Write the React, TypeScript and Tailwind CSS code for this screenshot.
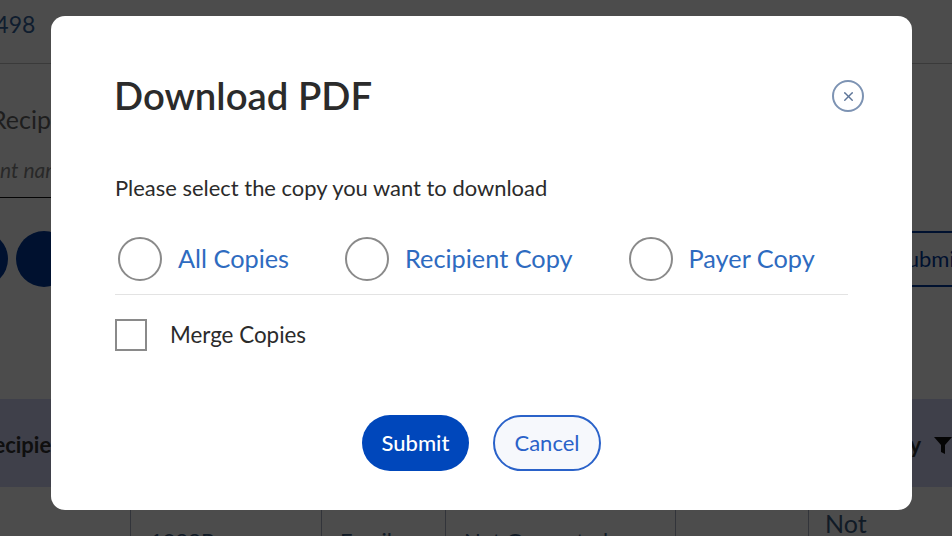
import { X } from 'lucide-react';

const font = "font-['Lato','Noto_Sans',sans-serif]";

// page that sits behind the dialog, only its edges show
function BackgroundPage() {
	return (
		<div className="w-[952px] h-[536px] overflow-hidden bg-white text-[#555]">
			<div className="h-16 border-b border-[#c4c4c4] pt-[6px] -ml-[18px] text-[23px] leading-9 text-[#34639c]">
				1498
			</div>
			<div className="h-[136px] pt-[39px] -ml-[9px]">
				<div className="text-[25px] leading-8 text-[#666]">Recipient</div>
				<div className="w-[70px] h-[63px] -ml-[10px] border-b-[1.5px] border-[#111] pt-[21px] italic text-[21px] leading-7 whitespace-nowrap text-[#888]">
					<span className="ml-[9px] block">ent name</span>
				</div>
			</div>
			<div className="h-[200px] pt-[31px] flex">
				<div className="w-[56px] h-[56px] -ml-[48px] rounded-full bg-[#003a9e]" />
				<div className="w-[56px] h-[56px] ml-[8px] rounded-full bg-[#003a9e]" />
				<div className="w-[150px] h-[56px] ml-auto -mr-[48px] rounded-full border-2 border-[#003a9e] pl-[43px] text-[22px] leading-[52px] text-[#003a9e]">
					Submit
				</div>
			</div>
			<div className="h-[88px] -mt-[1px] bg-[#d3d6f8] flex items-center justify-between font-bold text-[22px] text-[#333] pt-[3px]">
				<span className="-ml-[20px]">Recipient</span>
				<span className="flex items-center gap-[12px] -mr-[1px]">
					Copy
					<svg width="20" height="20" viewBox="0 0 20 20">
						<path d="M1 2h18l-7 8v9l-4-2v-7z" fill="#111" />
					</svg>
				</span>
			</div>
			<div className="flex h-[60px] text-[22px] text-[#3a5a80]">
				<div className="w-[131px] border-r border-[#a8b0c4]" />
				<div className="w-[191px] border-r border-[#a8b0c4] pl-[19px] pt-[37px]">1099R</div>
				<div className="w-[124px] border-r border-[#a8b0c4] pl-[18px] pt-[37px]">Email</div>
				<div className="w-[230px] border-r border-[#a8b0c4] pl-[18px] pt-[37px]">Not Generated</div>
				<div className="w-[133px] border-r border-[#a8b0c4]" />
				<div className="pl-[16px] pt-[22px] text-[25px] leading-7">Not</div>
			</div>
		</div>
	);
}

function CopyOption({ label }: { label: string }) {
	return (
		<label className="flex items-center gap-[16px] ml-[3px]">
			<span className="w-[44px] h-[44px] rounded-full border-2 border-[#8a8a8a] bg-white" />
			<span className="pb-[2px] text-[25.3px] leading-8 text-[#2e6bc0] whitespace-nowrap">{label}</span>
		</label>
	);
}

export default function App() {
	return (
		<div className={`relative w-[952px] h-[536px] overflow-hidden ${font}`}>
			<BackgroundPage />
			<div className="absolute inset-0 bg-black/70" />
			<div className="absolute left-[51px] top-[16px] w-[861px] h-[494px] rounded-[14px] bg-white px-[64px] text-[#2b2b2b]">
				<div className="flex items-center justify-between pt-[53px] h-[107px]">
					<h2 className="text-[38.3px] leading-[54px] font-semibold -mt-[2px] -ml-[1px]">Download PDF</h2>
					<button className="w-[32px] h-[32px] -mr-[16px] rounded-full border-2 border-[#7d93b3] flex items-center justify-center text-[#5d7598]">
						<X size={15} strokeWidth={2.25} />
					</button>
				</div>
				<p className="mt-[49px] text-[21.95px] leading-8">Please select the copy you want to download</p>
				<div className="mt-[33px] pb-[13px] flex gap-[53px] border-b border-[#e3e3e3]">
					<CopyOption label="All Copies" />
					<CopyOption label="Recipient Copy" />
					<CopyOption label="Payer Copy" />
				</div>
				<div className="mt-[24px] flex items-center gap-[23px]">
					<span className="w-[32px] h-[32px] border-2 border-[#8a8a8a]" />
					<span className="text-[22.4px] leading-8">Merge Copies</span>
				</div>
				<div className="mt-[64px] flex justify-center gap-[24px]">
					<button className="w-[107px] h-[56px] pb-[2px] rounded-full bg-[#0047bb] text-white text-[22px] font-medium">
						Submit
					</button>
					<button className="w-[108px] h-[56px] pb-[2px] rounded-full border-2 border-[#2a62c9] bg-[#f6f8fc] text-[#2a62c9] text-[22px]">
						Cancel
					</button>
				</div>
			</div>
		</div>
	);
}
